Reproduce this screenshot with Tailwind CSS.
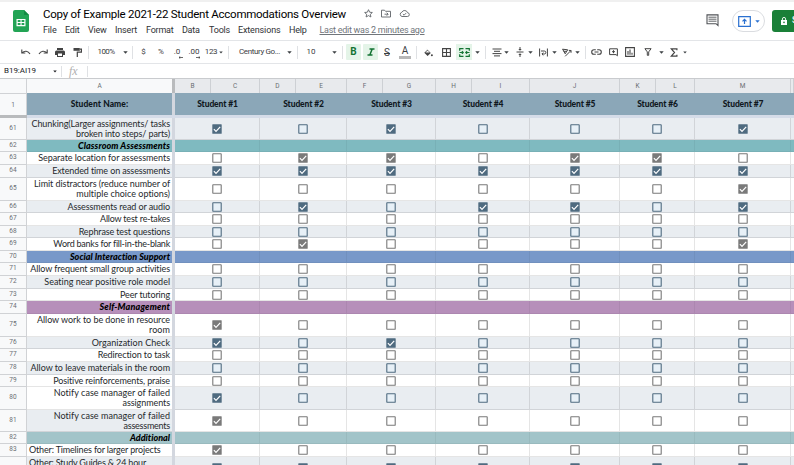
<!DOCTYPE html>
<html lang="en">
<head>
<meta charset="utf-8">
<title>Student Accommodations Overview</title>
<script src="https://cdn.jsdelivr.net/npm/@tailwindcss/browser@4"></script>
</head>
<body class="w-[794px] h-[465px] overflow-hidden bg-white font-[Roboto,sans-serif] text-[#3c4043]">
<svg class="hidden">
  <symbol id="caret" viewBox="0 0 5 3"><path d="M.3 .3h4.4L2.5 2.7z" fill="currentColor"/></symbol>
</svg>
<div class="flex flex-col w-[794px] h-[465px] overflow-hidden">
  <div class="h-[2px] shrink-0 bg-[#f0f0f0]"></div>
  <header class="h-[38px] shrink-0 flex">
    <svg class="shrink-0 ml-[13px] mt-[8px]" width="17" height="22" viewBox="0 0 17 22"><path d="M2 0h9l5 5v15a2 2 0 0 1-2 2H2a2 2 0 0 1-2-2V2a2 2 0 0 1 2-2z" fill="#23a455"/><path d="M11 0l5 5h-5z" fill="#148a43"/><path d="M3.5 9h9v7.2h-9zM4.7 12.1h2.8v-2H4.700zM8.600 12.100h2.700v-2H8.600zM4.700 15.100h2.800v-2H4.700zM8.600 15.100h2.700v-2H8.600z" fill="#fff" fill-rule="evenodd"/></svg>
    <div class="ml-[13px] w-[660px] shrink-0 flex flex-col">
      <div class="flex items-center h-[19px] pt-[4px] text-black">
        <div class="w-[321px] text-[11.500px] leading-[16px] whitespace-nowrap"><span data-w="303">Copy of Example 2021-22 Student Accommodations Overview</span></div>
        <svg class="shrink-0" width="9" height="9" viewBox="0 0 9 9" fill="none" stroke="#5f6368" stroke-width=".9"><path d="M4.500 .7l1.150 2.500 2.700.3-2 1.800.55 2.700-2.400-1.400L2.100 8l.55-2.700-2-1.800 2.700-.3z"/></svg>
        <svg class="shrink-0 ml-[8px]" width="10" height="9" viewBox="0 0 10 9" fill="none" stroke="#5f6368" stroke-width=".9"><path d="M.5 1.200h3l1 1.100h5v5.700h-9zM3.500 5.200h3.500M5.700 3.700l1.500 1.500-1.500 1.500"/></svg>
        <svg class="shrink-0 ml-[8px]" width="11" height="9" viewBox="0 0 11 9" fill="none" stroke="#5f6368" stroke-width=".9"><path d="M3 7.500h5.300a1.900 1.900 0 0 0 .2-3.800A3 3 0 0 0 2.900 3.200 2.200 2.200 0 0 0 3 7.500zM3.900 5.100l1.200 1.100 2-2.100"/></svg>
      </div>
      <nav class="flex h-[19px] pt-[1px] text-[9px] leading-[16px] text-[#303235] whitespace-nowrap">
        <div class="w-[22px]"><span data-w="13.500">File</span></div>
        <div class="w-[23px]"><span data-w="14.500">Edit</span></div>
        <div class="w-[27px]"><span data-w="18.500">View</span></div>
        <div class="w-[31px]"><span data-w="22">Insert</span></div>
        <div class="w-[36px]"><span data-w="27.500">Format</span></div>
        <div class="w-[27px]"><span data-w="17.500">Data</span></div>
        <div class="w-[29px]"><span data-w="21">Tools</span></div>
        <div class="w-[51px]"><span data-w="42.500">Extensions</span></div>
        <div class="w-[30.500px]"><span data-w="17.500">Help</span></div>
        <div class="text-[#70757a] underline"><span data-w="105">Last edit was 2 minutes ago</span></div>
      </nav>
    </div>
    <svg class="shrink-0 mt-[12px] ml-[3px]" width="13" height="13" viewBox="0 0 13 13" fill="none" stroke="#505357"><path d="M1 .900h11v10.600l-2-1.800H1z" stroke-width="1.100"/><path d="M2.500 3.200h8M2.500 5.200h8M2.500 7.200h8" stroke-width=".9"/></svg>
    <div class="shrink-0 ml-[13px] mt-[8px] w-[33px] h-[22px] rounded-full border border-[#dadce0] flex items-center justify-center gap-[4px] text-[#2a70d0]">
      <svg width="13" height="11" viewBox="0 0 13 11" fill="none" stroke="#2a70d0" stroke-width="1.200"><path d="M.7 .7h11.600v9.600H.7z"/><path d="M6.500 8V3.500M4.500 5.300l2-2 2 2"/></svg>
      <svg width="5" height="3"><use href="#caret"/></svg>
    </div>
    <div class="shrink-0 ml-[7px] mt-[8px] w-[80px] h-[22px] rounded-[3px] bg-[#1a8038] text-white flex items-center pl-[9px] text-[9px] font-medium">
      <svg width="6" height="8" viewBox="0 0 6 8"><path d="M0 3h6v5H0z" fill="#fff"/><path d="M1.400 3V2a1.600 1.600 0 0 1 3.200 0v1" fill="none" stroke="#fff" stroke-width=".9"/><circle cx="3" cy="5.400" r=".8" fill="#1a8038"/></svg>
      <span class="ml-[5px]">Share</span>
    </div>
  </header>
  <div class="h-[24px] shrink-0 border-y border-[#e3e5e8] flex items-center pl-[17px] text-[8px] text-[#3c4043] whitespace-nowrap">
    <div class="w-[17px] shrink-0 flex justify-center"><svg width="10" height="6" viewBox="0 0 10 6"><path d="M.8 .5v3.500h3.500M1.200 3.700C3.500 1.500 7 1.500 9 5" fill="none" stroke="#444" stroke-width="1.100"/></svg></div>
    <div class="w-[18px] shrink-0 flex justify-center"><svg width="10" height="6" viewBox="0 0 10 6"><path d="M9.200 .5v3.500H5.700M8.800 3.700C6.500 1.500 3 1.500 1 5" fill="none" stroke="#444" stroke-width="1.100"/></svg></div>
    <div class="w-[16px] shrink-0 flex justify-center"><svg width="10" height="9" viewBox="0 0 10 9"><path d="M2 0h6v2H2zM1.500 2.500h7A1.500 1.500 0 0 1 10 4v3H8v2H2V7H0V4a1.500 1.500 0 0 1 1.500-1.500zM3 5.500V8h4V5.500z" fill="#444" fill-rule="evenodd"/></svg></div>
    <div class="w-[18px] shrink-0 flex justify-center"><svg width="9" height="9" viewBox="0 0 9 9"><path d="M.5 0h6.300v2.800H.5z" fill="#444"/><path d="M7 1.200h1.400v3H4.300V9" fill="none" stroke="#444" stroke-width="1.200"/></svg></div>
    <div class="w-[5px] shrink-0 flex justify-center"><i class="w-px h-[13px] bg-[#dfe1e4]"></i></div>
    <div class="w-[30px] shrink-0 text-center"><span data-w="17">100%</span></div>
    <div class="w-[8px] shrink-0 flex justify-center"><svg class="shrink-0" width="5" height="3"><use href="#caret"/></svg></div>
    <div class="w-[6px] shrink-0 flex justify-center"><i class="w-px h-[13px] bg-[#dfe1e4]"></i></div>
    <div class="w-[17px] shrink-0 text-center">$</div>
    <div class="w-[18px] shrink-0 text-center">%</div>
    <div class="w-[14px] shrink-0 flex flex-col items-center"><span class="leading-[8px] pt-[3px]">.0</span><svg class="self-end" width="6" height="3" viewBox="0 0 6 3"><path d="M1 1.500h4M2.300 .3L1 1.500l1.300 1.200" fill="none" stroke="#444" stroke-width=".8"/></svg></div>
    <div class="w-[20px] shrink-0 flex flex-col items-center"><span class="leading-[8px] pt-[3px]">.00</span><svg class="self-end mr-[3px]" width="6" height="3" viewBox="0 0 6 3"><path d="M1 1.500h4M3.700 .3L5 1.500 3.700 2.700" fill="none" stroke="#444" stroke-width=".8"/></svg></div>
    <div class="w-[14px] shrink-0 text-center"><span data-w="12.500">123</span></div>
    <div class="w-[5px] shrink-0 flex justify-center"><svg class="shrink-0" width="4" height="3"><use href="#caret"/></svg></div>
    <div class="w-[11px] shrink-0 flex justify-center"><i class="w-px h-[13px] bg-[#dfe1e4]"></i></div>
    <div class="w-[52px] shrink-0 pl-[5px]"><span data-w="41">Century Go...</span></div>
    <div class="w-[6px] shrink-0 flex justify-center"><svg class="shrink-0" width="5" height="3"><use href="#caret"/></svg></div>
    <div class="w-[10px] shrink-0 flex justify-center"><i class="w-px h-[13px] bg-[#dfe1e4]"></i></div>
    <div class="w-[18px] shrink-0 text-center">10</div>
    <div class="w-[11px] ml-[9px] shrink-0 flex justify-center"><svg class="shrink-0" width="5" height="3"><use href="#caret"/></svg></div>
    <div class="w-[4px] shrink-0 flex justify-center"><i class="w-px h-[13px] bg-[#dfe1e4]"></i></div>
    <div class="w-[15px] h-[16px] ml-[2px] shrink-0 rounded-[1px] bg-[#e4f4e8] text-[#137333] text-[10px] leading-[16px] font-bold text-center">B</div>
    <div class="w-[15px] h-[16px] ml-[2px] shrink-0 rounded-[1px] bg-[#e4f4e8] flex items-center justify-center"><svg width="8" height="8" viewBox="0 0 8 8"><path d="M2.500 .9h5M.5 7.100h5M5.200 .9L2.800 7.100" fill="none" stroke="#137333" stroke-width="1.500"/></svg></div>
    <div class="w-[18px] shrink-0 text-center text-[10px] line-through">S</div>
    <div class="w-[18px] shrink-0 flex flex-col items-center"><span class="text-[10px] leading-[10px]">A</span><i class="w-[12px] h-[3px] bg-[#b7b7b7]"></i></div>
    <div class="w-[4px] shrink-0 flex justify-center"><i class="w-px h-[13px] bg-[#dfe1e4]"></i></div>
    <div class="w-[20px] shrink-0 flex justify-center"><svg width="9" height="9" viewBox="0 0 9 9"><path d="M2 .3l4.800 4.600L3.600 8 .3 4.800 3.400 1.800z" fill="#444"/><path d="M3.600 2.600L1.500 4.600h4.200z" fill="#fff"/><circle cx="7.900" cy="7.300" r="1" fill="#444"/></svg></div>
    <div class="w-[16px] shrink-0 flex justify-center"><svg width="9" height="9" viewBox="0 0 9 9"><path d="M.6 .6h7.800v7.800H.6zM4.500 .6v7.800M.6 4.500h7.800" fill="none" stroke="#444" stroke-width="1.100"/></svg></div>
    <div class="w-[20px] shrink-0 flex justify-center"><div class="w-[16px] h-[16px] bg-[#e4f4e8] flex items-center justify-center"><svg width="11" height="9" viewBox="0 0 11 9"><path d="M4.500 .7H.7v2M6.500 .7h3.800v2M.7 6.300v2h3.800M10.300 6.300v2H6.500M.5 4.500h3.700M2.900 3.200l1.300 1.300-1.300 1.300M10.500 4.500H6.800M8.100 3.200L6.800 4.500l1.300 1.300" fill="none" stroke="#137333" stroke-width="1.200"/></svg></div></div>
    <div class="w-[7px] shrink-0 flex justify-center"><svg class="shrink-0" width="5" height="3"><use href="#caret"/></svg></div>
    <div class="w-[9px] shrink-0 flex justify-center"><i class="w-px h-[13px] bg-[#dfe1e4]"></i></div>
    <div class="w-[13px] shrink-0 flex justify-center"><svg width="10" height="9" viewBox="0 0 10 9"><path d="M.5 1h9M2 3.300h6M.5 5.600h9M2 7.900h6" stroke="#444" stroke-width="1"/></svg></div>
    <div class="w-[7px] shrink-0 flex justify-center"><svg class="shrink-0" width="5" height="3"><use href="#caret"/></svg></div>
    <div class="w-[13px] ml-[3px] shrink-0 flex justify-center"><svg width="8" height="10" viewBox="0 0 8 10"><path d="M.5 5h7M4 0v2.500M4 10V7.500" stroke="#444"/><path d="M2.300 2h3.400L4 3.800zM2.300 8h3.400L4 6.200z" fill="#444"/></svg></div>
    <div class="w-[8px] shrink-0 flex justify-center"><svg class="shrink-0" width="5" height="3"><use href="#caret"/></svg></div>
    <div class="w-[18px] shrink-0 flex justify-center"><svg width="9" height="9" viewBox="0 0 9 9"><path d="M.6 .5v8M8.400 .5v8M2 3h3.300a1.400 1.400 0 0 1 0 3H3M4.300 4.600L2.900 6l1.400 1.400" fill="none" stroke="#444"/></svg></div>
    <div class="w-[4px] shrink-0 flex justify-center"><svg class="shrink-0" width="5" height="3"><use href="#caret"/></svg></div>
    <div class="w-[14px] ml-[4px] shrink-0 flex justify-center"><svg width="10" height="9" viewBox="0 0 10 9"><path d="M.5 1.200l5.300.6M.6 1.200l2.600 4.600L5.600 1.900M1.700 3.300h2.900M3.200 8.300l5.500-5.500M6.800 2.400l2.300.1-.1 2.300" fill="none" stroke="#444"/></svg></div>
    <div class="w-[6px] shrink-0 flex justify-center"><svg class="shrink-0" width="5" height="3"><use href="#caret"/></svg></div>
    <div class="w-[11px] shrink-0 flex justify-center"><i class="w-px h-[13px] bg-[#dfe1e4]"></i></div>
    <div class="w-[11px] shrink-0 flex justify-center"><svg class="shrink-0" width="11" height="6" viewBox="0 0 11 6"><path d="M4.800 .7H3a2.300 2.300 0 0 0 0 4.600h1.800M6.200 .7H8a2.300 2.300 0 0 1 0 4.600H6.200M3.500 3h4" fill="none" stroke="#444" stroke-width="1.100"/></svg></div>
    <div class="w-[18px] ml-[2px] shrink-0 flex justify-center"><svg width="9" height="9" viewBox="0 0 9 9"><path d="M.6 .8h7.800v7L7 6.600H.6zM4.500 2.200v3M3 3.700h3" fill="none" stroke="#444"/></svg></div>
    <div class="w-[16px] shrink-0 flex justify-center"><svg width="10" height="10" viewBox="0 0 10 10"><path d="M.6 .6h8.800v8.800H.6zM3 7.700V4M5 7.700V2.400M7 7.700V5.700" fill="none" stroke="#444" stroke-width="1.100"/></svg></div>
    <div class="w-[19px] shrink-0 flex justify-center"><svg width="8" height="8" viewBox="0 0 8 8"><path d="M.9 .7h6.200L4.700 3.900v3.400H3.300V3.900z" fill="none" stroke="#444"/></svg></div>
    <div class="w-[8px] shrink-0 flex justify-center"><svg class="shrink-0" width="5" height="3"><use href="#caret"/></svg></div>
    <div class="w-[18px] shrink-0 flex justify-center"><svg width="8" height="9" viewBox="0 0 8 9"><path d="M6.900 2.200V.9H1.300l3.200 3.600-3.200 3.600h5.600V6.800" fill="none" stroke="#444" stroke-width="1.200"/></svg></div>
    <div class="w-[3px] shrink-0 flex justify-center"><svg class="shrink-0" width="4" height="3"><use href="#caret"/></svg></div>
  </div>
  <div class="h-[15px] shrink-0 border-b border-[#c9cbce] flex items-center pl-[4px] text-[8px] text-[#202124]">
    <div class="w-[47px]"><span data-w="32">B19:AI19</span></div>
    <svg class="ml-[2px]" width="4" height="3"><use href="#caret"/></svg>
    <i class="ml-[4px] w-px h-[11px] bg-[#dfe1e4]"></i>
    <span class="ml-[7px] w-[12px] font-['Liberation_Serif',serif] italic text-[12px] leading-[12px] text-[#b0b0b0]">fx</span>
    <i class="ml-[6px] w-px h-[11px] bg-[#dfe1e4]"></i>
  </div>
  <div id="letters" class="flex shrink-0 h-[14px] text-[6.500px] text-[#6a6e73] leading-[14px] text-center"></div>
  <div id="names" class="flex shrink-0 h-[22px] text-[8.500px] leading-[22px] text-center font-[Lato,sans-serif] font-black text-[#10181e]"></div>
  <div class="flex shrink-0 h-[3px]">
    <div class="w-[27px] bg-[#b9bbbd]"></div><div class="flex-1 bg-[#d5dce8]"></div>
  </div>
  <div id="rows" class="flex flex-col shrink-0"></div>
</div>
<script>
const letters = [['B',36],['C',49],['D',36],['E',51],['F',36],['G',53],['H',36],['I',58],['J',90],['K',36],['L',39],['M',96],['',3]];
const students = [85,87,89,94,90,75,96];
const bar = '<div class="w-[3px] shrink-0 bg-[#d3d7df]"></div>';

document.getElementById('letters').innerHTML =
  '<div class="w-[27px] shrink-0 bg-[#f8f9fa] border-r border-[#d0d2d5]"></div><div class="w-[145px] shrink-0 bg-[#f8f9fa]">A</div><div class="w-[3px] shrink-0 bg-[#b9bbbd]"></div>' +
  letters.map(([l, w]) => `<div class="shrink-0 bg-[#e8eaed] border-r border-[#cdd0d4]" style="width:${w}px">${l}</div>`).join('');

document.getElementById('names').innerHTML =
  '<div class="w-[27px] shrink-0 bg-[#f8f9fa] border-r border-t border-[#d0d2d5] text-[6.500px] font-normal font-[Roboto,sans-serif] text-[#6a6e73]">1</div>' +
  '<div class="w-[145px] shrink-0 bg-[#8ba7b8]"><span data-w="57.500">Student Name:</span></div>' + bar +
  students.map((w, i) => `<div class="shrink-0 bg-[#8ba7b8]" style="width:${w}px"><span data-w="40.500">Student #${i + 1}</span></div>`).join('') +
  '<div class="flex-1 bg-[#8ba7b8]"></div>';

// [number, height, [[line, width], ...], checks, section]
const rows = [
  [61,22,[['Chunking(Larger assignments/ tasks',138.5],['broken into steps/ parts)',94]],'1010001'],
  [62,12,[['Classroom Assessments',92]],'','teal'],
  [63,13,[['Separate location for assessments',132]],'0110110'],
  [64,13,[['Extended time on assessments',118]],'1111111'],
  [65,23,[['Limit distractors (reduce number of',136],['multiple choice options)',94]],'0000001'],
  [66,12,[['Assessments read or audio',102.5]],'0101101'],
  [67,13,[['Allow test re-takes',70]],'0000000'],
  [68,12,[['Rephrase test questions',91.5]],'0000000'],
  [69,13,[['Word banks for fill-in-the-blank',116.5]],'0100001'],
  [70,12,[['Social Interaction Support',100]],'','blue'],
  [71,13,[['Allow frequent small group activities',140]],'0000000'],
  [72,13,[['Seating near positive role model',126]],'0000000'],
  [73,12,[['Peer tutoring',50]],'0000000'],
  [74,13,[['Self-Management',70.5]],'','purple'],
  [75,23,[['Allow work to be done in resource',133],['room',21]],'1000000'],
  [76,12,[['Organization Check',78.5]],'1010000'],
  [77,13,[['Redirection to task',72.5]],'0000000'],
  [78,13,[['Allow to leave materials in the room',139.5]],'0000000'],
  [79,12,[['Positive reinforcements, praise',117]],'0000000'],
  [80,23,[['Notify case manager of failed',116.5],['assignments',47.5]],'1000000'],
  [81,22,[['Notify case manager of failed',116.5],['assessments',46.5]],'1000000'],
  [82,12,[['Additional',40]],'','aqua'],
  [83,13,[['Other: Timelines for larger projects',131.5]],'1000000'],
  [84,23,[['Other: Study Guides & 24 hour',117]],'1111111'],
];
const banded = new Set([61,64,66,68,72,76,78,80,84]);
const fills = { teal: 'bg-[#7fbac0]', blue: 'bg-[#7898c9]', purple: 'bg-[#b68fba]', aqua: 'bg-[#a2c4c9]' };
const box = (on, band) => {
  const ink = band ? '#4f6b80' : '#7a7a7a';
  return on
    ? `<svg class="shrink-0" width="10" height="10" viewBox="0 0 10 10"><rect x=".3" y=".3" width="9.400" height="9.400" rx=".5" fill="${ink}"/><path d="M1.900 5.200l2.100 2.100 4.200-4.400" fill="none" stroke="#fff" stroke-width="1.200"/></svg>`
    : `<svg class="shrink-0" width="10" height="10" viewBox="0 0 10 10"><rect x=".8" y=".8" width="8.400" height="8.400" rx=".3" fill="${band ? '#e7f0f7' : '#fff'}" stroke="${ink}" stroke-width="1.100"/></svg>`;
};
document.getElementById('rows').innerHTML = rows.map(([n, h, lines, checks, section]) => {
  const band = banded.has(n);
  const bg = section ? fills[section] : band ? 'bg-[#e9edf1]' : 'bg-white';
  const line = section ? 'border-black/5' : 'border-black/10';
  const labelBg = n === 80 ? 'bg-white' : n === 81 ? 'bg-[#e9edf1]' : bg;
  const align = n >= 83 ? 'items-start pl-[2px]' : 'items-end pr-[2px]';
  const place = n === 84 ? 'justify-start pt-[1px]' : 'justify-center';
  const type = section ? 'font-black italic text-black' : 'text-[#26292c]';
  const number = n === 84 ? '' : n;
  return `<div class="flex shrink-0" style="height:${h}px">
    <div class="w-[27px] shrink-0 bg-[#f8f9fa] border-r border-b border-[#d0d2d5] flex items-center justify-center text-[6.500px] text-[#6a6e73]">${number}</div>
    <div class="w-[145px] shrink-0 ${labelBg} border-b ${line} flex flex-col ${place} ${align} ${type} font-[Lato,sans-serif] text-[9px] leading-[10px] whitespace-nowrap">${lines.map(([t, w]) => `<span data-w="${w}">${t}</span>`).join('')}</div>${bar}
    ${students.map((w, i) => `<div class="shrink-0 ${bg} border-r border-b ${line} flex items-center justify-center" style="width:${w}px">${checks ? box(checks[i] === '1', band) : ''}</div>`).join('')}
    <div class="flex-1 ${bg} border-b ${line}"></div></div>`;
}).join('');

function fit() {
  const labels = [...document.querySelectorAll('[data-w]')];
  labels.forEach(el => { el.style.letterSpacing = '0px'; });
  const widths = labels.map(el => el.getBoundingClientRect().width);
  labels.forEach((el, i) => {
    el.style.letterSpacing = (+el.dataset.w - widths[i]) / el.textContent.length + 'px';
  });
}
fit();
new ResizeObserver(fit).observe(document.body);
window.addEventListener('load', fit);
document.fonts.ready.then(fit);
</script>
</body>
</html>
